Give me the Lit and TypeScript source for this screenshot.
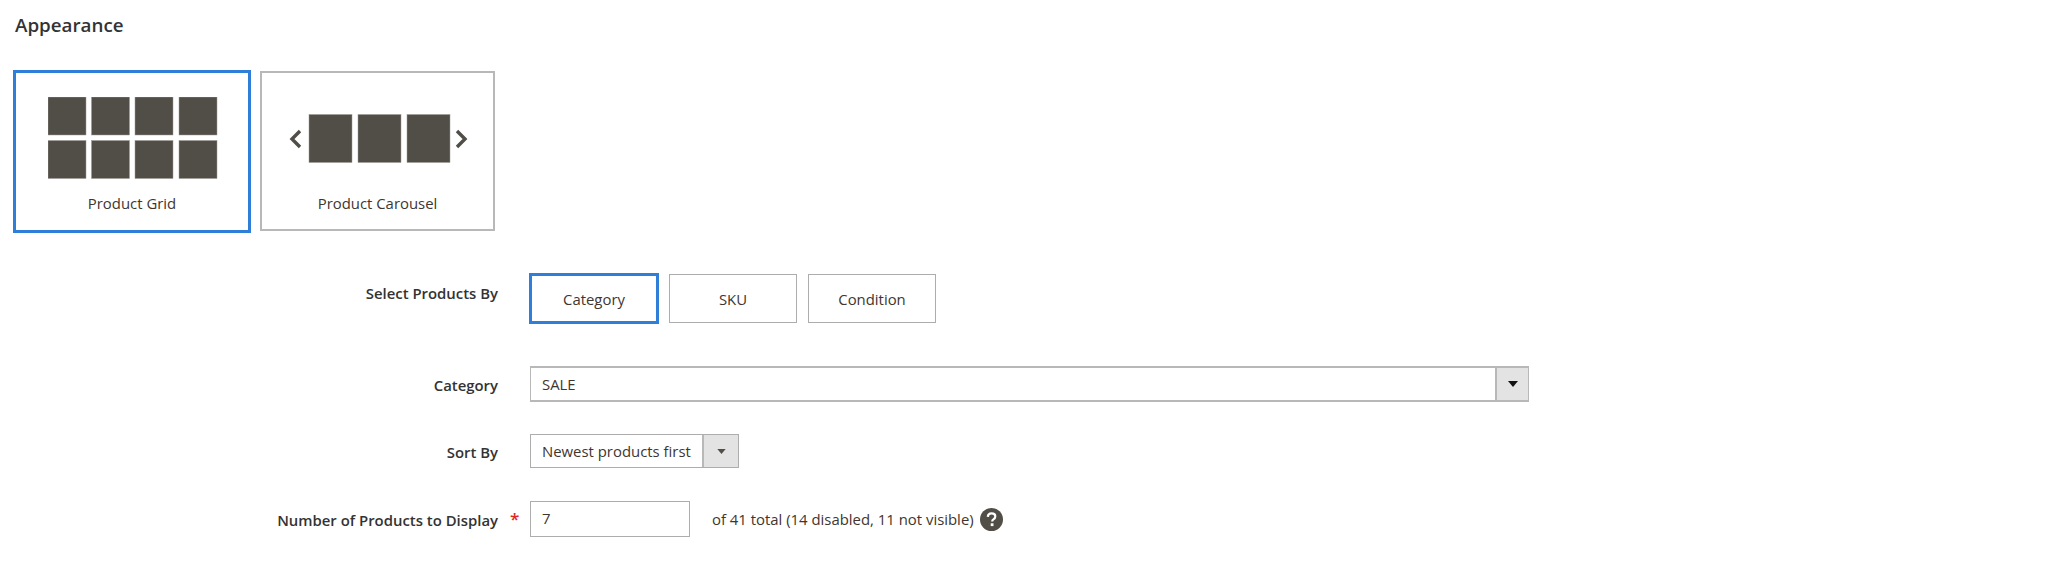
import { LitElement, html, css, svg } from "lit";
import { customElement } from "lit/decorators.js";

@customElement("app-root")
export class AppRoot extends LitElement {
  static styles = css`
    :host { display: block; width: 2048px; height: 569px; overflow: hidden; background: #fff; font-family: "Open Sans", sans-serif; color: #41362f; font-size: 14.9px; }
    .page { display: flex; flex-direction: column; padding: 13px 0 0 14px; }
    h2 { margin: 0; font-size: 18.8px; line-height: 24px; font-weight: 600; color: #333; height: 24px; padding-left: 1px; }
    .cards { display: flex; gap: 9px; margin-top: 32.5px; margin-left: -1px; align-items: center; }
    .card { box-sizing: border-box; background: #fff; display: flex; flex-direction: column; align-items: center; }
    .card.active { width: 238px; height: 163px; border: 3px solid #2f7fd8; }
    .card.idle { width: 235px; height: 160px; border: 2px solid #b8b8b8; }
    .thumb { display: block; }
    .card.active .thumb { margin-top: 24.5px; margin-left: 1px; }
    .card.idle .thumb { margin-top: 41px; }
    .card-label { line-height: 20px; font-size: 14.9px; }
    .card.active .card-label { margin-top: 14px; }
    .card.idle .card-label { margin-top: 29px; }
    .form { display: flex; flex-direction: column; margin-top: 40.5px; margin-left: -14px; }
    .row { display: flex; align-items: center; }
    .label { width: 498px; text-align: right; font-weight: 600; font-size: 14.9px; line-height: 20px; color: #333; flex: none; }
    .mark { width: 32px; flex: none; color: #e22626; font-weight: 600; font-size: 17px; padding-left: 12px; box-sizing: border-box; line-height: 20px; }
    .seg { display: flex; gap: 10px; }
    .seg-btn { box-sizing: border-box; width: 128px; height: 49px; border: 1.5px solid #adadad; background: #fff; display: flex; align-items: center; justify-content: center; font-size: 14.9px; }
    .seg-btn.active { width: 130px; height: 51px; border: 3px solid #2f7fd8; margin: -1px 0 -1px -1px; }
    .seg-btn.last { margin-left: 1px; }
    .r1 { height: 51px; }
    .r1 .label { margin-top: -11px; }
    .r2 { margin-top: 42px; height: 36px; }
    .r2 .label { margin-top: 2px; }
    .r3 .label, .r4 .label { margin-top: 1px; }
    .r3 { margin-top: 32px; height: 34px; }
    .r4 { margin-top: 33px; height: 36px; }
    .select { box-sizing: border-box; display: flex; border: 1px solid #adadad; background: #fff; height: 100%; }
    .select .value { flex: 1; padding-left: 11px; line-height: 32px; font-size: 14.9px; }
    .select.wide { width: 999px; border-width: 2px 1.5px; border-color: #b8b8b8; }
    .select.narrow { width: 209px; border-width: 1.5px; }
    .caret { box-sizing: border-box; width: 33px; background: #e3e3e3; border-left: 2px solid #b8b8b8; display: flex; align-items: center; justify-content: center; flex: none; }
    .narrow .caret { width: 36px; }
    .tri { display: block; }
    .input { box-sizing: border-box; width: 160px; height: 36px; border: 1.5px solid #adadad; padding-left: 11px; line-height: 33px; font-size: 14.9px; background: #fff; flex: none; }
    .note { margin-left: 22px; font-size: 14.9px; line-height: 20px; }
    .help { margin-left: 6px; display: block; }
  `;

  private grid() {
    const xs = [0, 43.5, 87, 131];
    const ys = [0, 43.5];
    return html`<svg class="thumb" width="170" height="82" viewBox="0 0 170 82">
      ${ys.map((y) => xs.map((x) => svg`<rect x=${x} y=${y} width="38" height="38" fill="#514d47" stroke="#a09c96" stroke-width="0.5"></rect>`))}
    </svg>`;
  }

  private carousel() {
    return html`<svg class="thumb" width="180" height="50" viewBox="0 0 180 50">
      <path d="M12 17 L4 25 L12 33" fill="none" stroke="#514d47" stroke-width="3.4"></path>
      <path d="M169 17 L177 25 L169 33" fill="none" stroke="#514d47" stroke-width="3.4"></path>
      ${[21, 70, 119].map((x) => svg`<rect x=${x} y="0.5" width="43" height="48" fill="#514d47" stroke="#a09c96" stroke-width="0.5"></rect>`)}
    </svg>`;
  }

  private tri(w: number, h: number, c: string) {
    return html`<svg class="tri" width=${w} height=${h} viewBox="0 0 10 6"><path d="M0 0H10L5 6Z" fill=${c}></path></svg>`;
  }

  render() {
    return html`<div class="page">
      <h2>Appearance</h2>
      <div class="cards">
        <div class="card active">${this.grid()}<div class="card-label">Product Grid</div></div>
        <div class="card idle">${this.carousel()}<div class="card-label">Product Carousel</div></div>
      </div>
      <div class="form">
        <div class="row r1">
          <div class="label">Select Products By</div><div class="mark"></div>
          <div class="seg">
            <div class="seg-btn active">Category</div>
            <div class="seg-btn">SKU</div>
            <div class="seg-btn last">Condition</div>
          </div>
        </div>
        <div class="row r2">
          <div class="label">Category</div><div class="mark"></div>
          <div class="select wide"><div class="value">SALE</div><div class="caret">${this.tri(10, 6, "#111")}</div></div>
        </div>
        <div class="row r3">
          <div class="label">Sort By</div><div class="mark"></div>
          <div class="select narrow"><div class="value">Newest products first</div><div class="caret">${this.tri(9, 5, "#514d47")}</div></div>
        </div>
        <div class="row r4">
          <div class="label">Number of Products to Display</div><div class="mark">*</div>
          <div class="input">7</div>
          <div class="note">of 41 total (14 disabled, 11 not visible)</div>
          <svg class="help" width="23" height="23" viewBox="0 0 23 23">
            <circle cx="11.5" cy="11.5" r="11.5" fill="#514d47"></circle>
            <path d="M7.8 8.9 C7.9 6.6 9.5 5.4 11.6 5.4 C13.8 5.4 15.3 6.6 15.3 8.5 C15.3 10 14.4 10.7 13.4 11.4 C12.5 12 12.2 12.5 12.2 13.6" fill="none" stroke="#fff" stroke-width="2.2"></path>
            <rect x="10.7" y="15.3" width="2.8" height="2.8" fill="#fff"></rect>
          </svg>
        </div>
      </div>
    </div>`;
  }
}
